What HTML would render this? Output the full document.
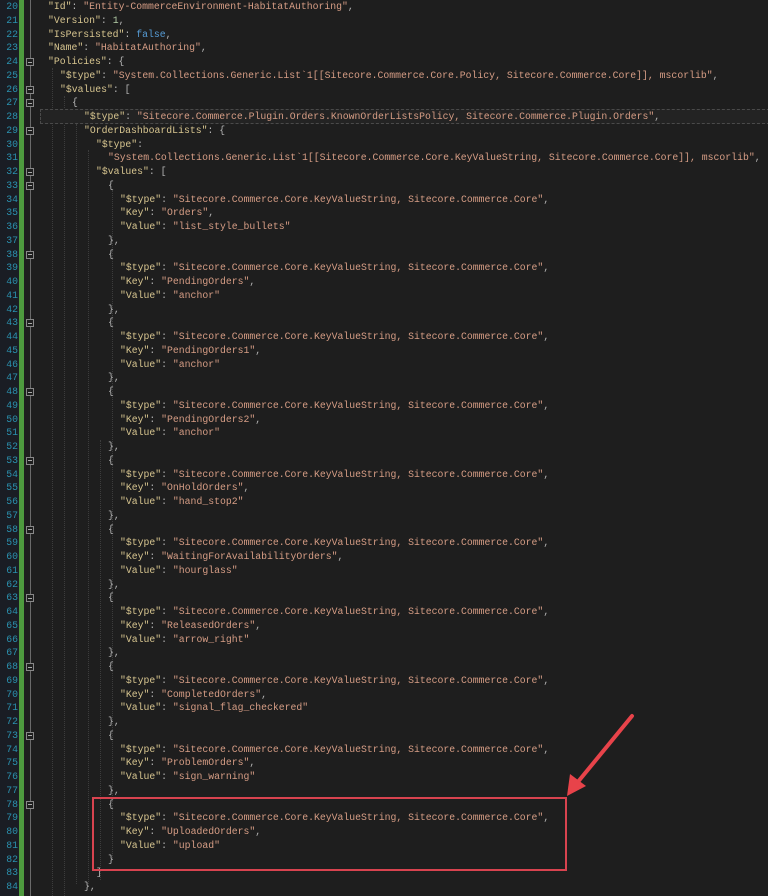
<!DOCTYPE html>
<html><head><meta charset="utf-8"><style>
html,body{margin:0;padding:0;background:#1e1e1e;width:768px;height:896px;overflow:hidden;position:relative}
#code{position:absolute;left:0;top:0;width:768px;font-family:"Liberation Mono",monospace;font-size:9.8px;line-height:13.76px;color:#b4b4b4}
.l{height:13.76px;position:relative}
.n{position:absolute;left:0;width:18px;text-align:right;color:#2b91af}
.c{position:absolute;white-space:pre}
.k{color:#d8c690}.s{color:#d69d85}.b{color:#569cd6}.v{color:#b5cea8}
.L0{left:48px}.L1{left:60px}.L2{left:72px}.L3{left:84px}.L4{left:96px}.L5{left:108px}.L6{left:120px}
.f{position:absolute;left:26px;top:3px;width:6px;height:6px;border:1px solid #888;background:#1e1e1e}
.f:after{content:"";position:absolute;left:1px;top:2.5px;width:4px;height:1px;background:#aaa}
.g{position:absolute;top:0;height:896px;border-left:1px dotted #3c3c3c}
</style></head><body>
<div style="position:absolute;left:0;top:0;width:19px;height:896px;background:#1a1d24"></div>
<div style="position:absolute;left:19px;top:0;width:5px;height:896px;background:#4e9a3e"></div>
<div style="position:absolute;left:30px;top:0;width:1px;height:896px;background:#6a6a6a"></div>
<div class="g" style="left:52px;top:68px;height:828px"></div>
<div class="g" style="left:64px;top:96px;height:800px"></div>
<div class="g" style="left:76px;top:124px;height:760px"></div>
<div class="g" style="left:88px;top:150px;height:736px"></div>
<div class="g" style="left:100px;top:440px;height:440px"></div>
<div class="g" style="left:112px;top:190px;height:670px"></div>
<div style="position:absolute;left:40px;top:109px;width:728px;height:13px;border:1px dashed #4a4a4a;background:#232323"></div>
<div id="code">
<div class="l"><span class="n">20</span><span class="c L0"><span class="k">"Id"</span>: <span class="s">"Entity-CommerceEnvironment-HabitatAuthoring"</span>,</span></div>
<div class="l"><span class="n">21</span><span class="c L0"><span class="k">"Version"</span>: <span class="v">1</span>,</span></div>
<div class="l"><span class="n">22</span><span class="c L0"><span class="k">"IsPersisted"</span>: <span class="b">false</span>,</span></div>
<div class="l"><span class="n">23</span><span class="c L0"><span class="k">"Name"</span>: <span class="s">"HabitatAuthoring"</span>,</span></div>
<div class="l"><span class="n">24</span><span class="f"></span><span class="c L0"><span class="k">"Policies"</span>: {</span></div>
<div class="l"><span class="n">25</span><span class="c L1"><span class="k">"$type"</span>: <span class="s">"System.Collections.Generic.List`1[[Sitecore.Commerce.Core.Policy, Sitecore.Commerce.Core]], mscorlib"</span>,</span></div>
<div class="l"><span class="n">26</span><span class="f"></span><span class="c L1"><span class="k">"$values"</span>: [</span></div>
<div class="l"><span class="n">27</span><span class="f"></span><span class="c L2">{</span></div>
<div class="l"><span class="n">28</span><span class="c L3"><span class="k">"$type"</span>: <span class="s">"Sitecore.Commerce.Plugin.Orders.KnownOrderListsPolicy, Sitecore.Commerce.Plugin.Orders"</span>,</span></div>
<div class="l"><span class="n">29</span><span class="f"></span><span class="c L3"><span class="k">"OrderDashboardLists"</span>: {</span></div>
<div class="l"><span class="n">30</span><span class="c L4"><span class="k">"$type"</span>:</span></div>
<div class="l"><span class="n">31</span><span class="c L5"><span class="s">"System.Collections.Generic.List`1[[Sitecore.Commerce.Core.KeyValueString, Sitecore.Commerce.Core]], mscorlib"</span>,</span></div>
<div class="l"><span class="n">32</span><span class="f"></span><span class="c L4"><span class="k">"$values"</span>: [</span></div>
<div class="l"><span class="n">33</span><span class="f"></span><span class="c L5">{</span></div>
<div class="l"><span class="n">34</span><span class="c L6"><span class="k">"$type"</span>: <span class="s">"Sitecore.Commerce.Core.KeyValueString, Sitecore.Commerce.Core"</span>,</span></div>
<div class="l"><span class="n">35</span><span class="c L6"><span class="k">"Key"</span>: <span class="s">"Orders"</span>,</span></div>
<div class="l"><span class="n">36</span><span class="c L6"><span class="k">"Value"</span>: <span class="s">"list_style_bullets"</span></span></div>
<div class="l"><span class="n">37</span><span class="c L5">},</span></div>
<div class="l"><span class="n">38</span><span class="f"></span><span class="c L5">{</span></div>
<div class="l"><span class="n">39</span><span class="c L6"><span class="k">"$type"</span>: <span class="s">"Sitecore.Commerce.Core.KeyValueString, Sitecore.Commerce.Core"</span>,</span></div>
<div class="l"><span class="n">40</span><span class="c L6"><span class="k">"Key"</span>: <span class="s">"PendingOrders"</span>,</span></div>
<div class="l"><span class="n">41</span><span class="c L6"><span class="k">"Value"</span>: <span class="s">"anchor"</span></span></div>
<div class="l"><span class="n">42</span><span class="c L5">},</span></div>
<div class="l"><span class="n">43</span><span class="f"></span><span class="c L5">{</span></div>
<div class="l"><span class="n">44</span><span class="c L6"><span class="k">"$type"</span>: <span class="s">"Sitecore.Commerce.Core.KeyValueString, Sitecore.Commerce.Core"</span>,</span></div>
<div class="l"><span class="n">45</span><span class="c L6"><span class="k">"Key"</span>: <span class="s">"PendingOrders1"</span>,</span></div>
<div class="l"><span class="n">46</span><span class="c L6"><span class="k">"Value"</span>: <span class="s">"anchor"</span></span></div>
<div class="l"><span class="n">47</span><span class="c L5">},</span></div>
<div class="l"><span class="n">48</span><span class="f"></span><span class="c L5">{</span></div>
<div class="l"><span class="n">49</span><span class="c L6"><span class="k">"$type"</span>: <span class="s">"Sitecore.Commerce.Core.KeyValueString, Sitecore.Commerce.Core"</span>,</span></div>
<div class="l"><span class="n">50</span><span class="c L6"><span class="k">"Key"</span>: <span class="s">"PendingOrders2"</span>,</span></div>
<div class="l"><span class="n">51</span><span class="c L6"><span class="k">"Value"</span>: <span class="s">"anchor"</span></span></div>
<div class="l"><span class="n">52</span><span class="c L5">},</span></div>
<div class="l"><span class="n">53</span><span class="f"></span><span class="c L5">{</span></div>
<div class="l"><span class="n">54</span><span class="c L6"><span class="k">"$type"</span>: <span class="s">"Sitecore.Commerce.Core.KeyValueString, Sitecore.Commerce.Core"</span>,</span></div>
<div class="l"><span class="n">55</span><span class="c L6"><span class="k">"Key"</span>: <span class="s">"OnHoldOrders"</span>,</span></div>
<div class="l"><span class="n">56</span><span class="c L6"><span class="k">"Value"</span>: <span class="s">"hand_stop2"</span></span></div>
<div class="l"><span class="n">57</span><span class="c L5">},</span></div>
<div class="l"><span class="n">58</span><span class="f"></span><span class="c L5">{</span></div>
<div class="l"><span class="n">59</span><span class="c L6"><span class="k">"$type"</span>: <span class="s">"Sitecore.Commerce.Core.KeyValueString, Sitecore.Commerce.Core"</span>,</span></div>
<div class="l"><span class="n">60</span><span class="c L6"><span class="k">"Key"</span>: <span class="s">"WaitingForAvailabilityOrders"</span>,</span></div>
<div class="l"><span class="n">61</span><span class="c L6"><span class="k">"Value"</span>: <span class="s">"hourglass"</span></span></div>
<div class="l"><span class="n">62</span><span class="c L5">},</span></div>
<div class="l"><span class="n">63</span><span class="f"></span><span class="c L5">{</span></div>
<div class="l"><span class="n">64</span><span class="c L6"><span class="k">"$type"</span>: <span class="s">"Sitecore.Commerce.Core.KeyValueString, Sitecore.Commerce.Core"</span>,</span></div>
<div class="l"><span class="n">65</span><span class="c L6"><span class="k">"Key"</span>: <span class="s">"ReleasedOrders"</span>,</span></div>
<div class="l"><span class="n">66</span><span class="c L6"><span class="k">"Value"</span>: <span class="s">"arrow_right"</span></span></div>
<div class="l"><span class="n">67</span><span class="c L5">},</span></div>
<div class="l"><span class="n">68</span><span class="f"></span><span class="c L5">{</span></div>
<div class="l"><span class="n">69</span><span class="c L6"><span class="k">"$type"</span>: <span class="s">"Sitecore.Commerce.Core.KeyValueString, Sitecore.Commerce.Core"</span>,</span></div>
<div class="l"><span class="n">70</span><span class="c L6"><span class="k">"Key"</span>: <span class="s">"CompletedOrders"</span>,</span></div>
<div class="l"><span class="n">71</span><span class="c L6"><span class="k">"Value"</span>: <span class="s">"signal_flag_checkered"</span></span></div>
<div class="l"><span class="n">72</span><span class="c L5">},</span></div>
<div class="l"><span class="n">73</span><span class="f"></span><span class="c L5">{</span></div>
<div class="l"><span class="n">74</span><span class="c L6"><span class="k">"$type"</span>: <span class="s">"Sitecore.Commerce.Core.KeyValueString, Sitecore.Commerce.Core"</span>,</span></div>
<div class="l"><span class="n">75</span><span class="c L6"><span class="k">"Key"</span>: <span class="s">"ProblemOrders"</span>,</span></div>
<div class="l"><span class="n">76</span><span class="c L6"><span class="k">"Value"</span>: <span class="s">"sign_warning"</span></span></div>
<div class="l"><span class="n">77</span><span class="c L5">},</span></div>
<div class="l"><span class="n">78</span><span class="f"></span><span class="c L5">{</span></div>
<div class="l"><span class="n">79</span><span class="c L6"><span class="k">"$type"</span>: <span class="s">"Sitecore.Commerce.Core.KeyValueString, Sitecore.Commerce.Core"</span>,</span></div>
<div class="l"><span class="n">80</span><span class="c L6"><span class="k">"Key"</span>: <span class="s">"UploadedOrders"</span>,</span></div>
<div class="l"><span class="n">81</span><span class="c L6"><span class="k">"Value"</span>: <span class="s">"upload"</span></span></div>
<div class="l"><span class="n">82</span><span class="c L5">}</span></div>
<div class="l"><span class="n">83</span><span class="c L4">]</span></div>
<div class="l"><span class="n">84</span><span class="c L3">},</span></div>
</div>
<div style="position:absolute;left:92px;top:797px;width:471px;height:70px;border:2px solid #d8434f"></div>
<svg style="position:absolute;left:0;top:0" width="768" height="896">
<line x1="632" y1="716" x2="577" y2="783" stroke="#e8434a" stroke-width="4" stroke-linecap="round"/>
<polygon points="567,796 570,774 586,786" fill="#e8434a"/>
</svg>
</body></html>
